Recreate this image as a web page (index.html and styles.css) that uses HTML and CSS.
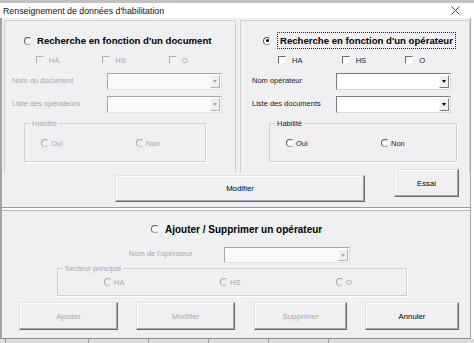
FILE: index.html
```html
<!DOCTYPE html>
<html lang="fr">
<head>
  <meta charset="UTF-8">
  <title>Renseignement de données d'habilitation</title>
  <link rel="stylesheet" href="styles.css">
</head>
<body>
  <div class="window">
    <div class="titlebar">
      <span class="title">Renseignement de données d'habilitation</span>
      <svg class="close" width="9" height="9" viewBox="0 0 9 9">
        <path d="M0.5 0.5 L8.5 8.5 M8.5 0.5 L0.5 8.5" stroke="#444" stroke-width="1" fill="none"/>
      </svg>
    </div>

    <div class="client">
      <div class="top">
        <div class="panels">
          <!-- Recherche par document (désactivé) -->
          <section class="panel panel-left off">
            <div class="head">
              <span class="radio"></span>
              <span class="head-text">Recherche en fonction d'un document</span>
            </div>
            <div class="checks">
              <label class="check-item"><span class="check"></span>HA</label>
              <label class="check-item"><span class="check"></span>HS</label>
              <label class="check-item"><span class="check"></span>O</label>
            </div>
            <div class="field">
              <span class="label">Nom du document</span>
              <span class="combo"><span class="drop"></span></span>
            </div>
            <div class="field field-2">
              <span class="label">Liste des opérateurs</span>
              <span class="combo"><span class="drop"></span></span>
            </div>
            <fieldset class="group">
              <legend>Habilité</legend>
              <div class="options">
                <label class="opt"><span class="radio"></span>Oui</label>
                <label class="opt"><span class="radio"></span>Non</label>
              </div>
            </fieldset>
          </section>

          <!-- Recherche par opérateur (actif) -->
          <section class="panel panel-right">
            <div class="head">
              <span class="radio on"></span>
              <span class="head-text focus">Recherche en fonction d'un opérateur</span>
            </div>
            <div class="checks">
              <label class="check-item"><span class="check"></span>HA</label>
              <label class="check-item"><span class="check"></span>HS</label>
              <label class="check-item"><span class="check"></span>O</label>
            </div>
            <div class="field">
              <span class="label">Nom opérateur</span>
              <span class="combo"><span class="drop"></span></span>
            </div>
            <div class="field field-2">
              <span class="label">Liste des documents</span>
              <span class="combo"><span class="drop"></span></span>
            </div>
            <fieldset class="group">
              <legend>Habilité</legend>
              <div class="options">
                <label class="opt"><span class="radio"></span>Oui</label>
                <label class="opt"><span class="radio"></span>Non</label>
              </div>
            </fieldset>
          </section>
        </div>

        <div class="actions">
          <button class="btn btn-modifier">Modifier</button>
          <button class="btn btn-essai">Essai</button>
        </div>
      </div>

      <div class="divider"></div>

      <!-- Ajout / suppression -->
      <div class="bottom off">
        <div class="head">
          <span class="radio"></span>
          <span class="head-text">Ajouter / Supprimer un opérateur</span>
        </div>
        <div class="field">
          <span class="label">Nom de l'opérateur</span>
          <span class="combo"><span class="drop"></span></span>
        </div>
        <fieldset class="group">
          <legend>Secteur principal</legend>
          <div class="options">
            <label class="opt"><span class="radio"></span>HA</label>
            <label class="opt"><span class="radio"></span>HS</label>
            <label class="opt"><span class="radio"></span>O</label>
          </div>
        </fieldset>
        <div class="buttons">
          <button class="btn" disabled>Ajouter</button>
          <button class="btn" disabled>Modifier</button>
          <button class="btn" disabled>Supprimer</button>
          <button class="btn btn-annuler">Annuler</button>
        </div>
      </div>
    </div>

    <div class="sheet">
      <span></span><span></span><span></span><span></span><span></span><span></span>
    </div>
  </div>
</body>
</html>
```

FILE: styles.css
```css
:root {
  --face: #f0eff2;
  --text: #1a1a1a;
  --muted: #a9a9ad;
  --edge: #a4a4a8;
  --frame: #cfcfd3;
}
* {
  box-sizing: border-box;
}
body {
  margin: 0;
  background: #ffffff;
  font-family: 'Liberation Sans', Arial, sans-serif;
  font-size: 7.5px;
  color: var(--text);
}
.window {
  width: 474px;
  height: 343px;
  overflow: hidden;
}
.titlebar {
  height: 18px;
  border-top: 3px solid #c2c2c4;
  background: #ffffff;
  display: flex;
  align-items: center;
  justify-content: space-between;
  padding: 0 14px 0 3px;
}
.title {
  font-size: 8.8px;
  color: #111;
}
.client {
  width: 471px;
  height: 321px;
  background: var(--face);
  border-left: 2px solid var(--edge);
  border-right: 1px solid var(--edge);
  border-bottom: 1px solid #8e8e92;
}
.top {
  height: 189px;
  padding: 2px 0 0 2px;
}
.panels {
  display: flex;
  gap: 4px;
}
.panel {
  height: 153px;
  border: 1px solid var(--frame);
  border-bottom: none;
}
.panel-left {
  width: 232px;
}
.panel-right {
  width: 230px;
}

/* titres avec bouton radio */
.head {
  display: flex;
  align-items: center;
  height: 17px;
  margin-top: 11px;
}
.head-text {
  font-weight: bold;
  font-size: 9.6px;
  color: #000;
}
.panel-left .head {
  padding-left: 19px;
  gap: 5px;
}
.panel-right .head {
  padding-left: 22px;
  gap: 6px;
}
.focus {
  border: 1px dotted #222;
  padding: 2px;
}

/* radios et cases */
.radio {
  display: inline-flex;
  align-items: center;
  justify-content: center;
  flex: none;
  width: 8px;
  height: 8px;
  border-radius: 50%;
  border: 1px solid;
  border-color: #5a5a5e #f4f4f4 #9a9a9e #5a5a5e;
  background: #ffffff;
}
.radio.on::after {
  content: "";
  width: 3px;
  height: 3px;
  border-radius: 50%;
  background: #000;
}
.check {
  display: inline-block;
  flex: none;
  width: 8px;
  height: 8px;
  border: 1px solid;
  border-color: #6e6e72 #f6f6f6 #f6f6f6 #6e6e72;
  background: #ffffff;
}
.checks {
  display: flex;
  height: 12px;
  margin-top: 5px;
}
.check-item {
  display: flex;
  align-items: center;
  gap: 5px;
}
.panel-left .checks {
  padding-left: 31px;
}
.panel-left .check-item {
  width: 67px;
}
.panel-right .checks {
  padding-left: 37px;
}
.panel-right .check-item {
  width: 65.5px;
  gap: 6px;
}

/* libellés + listes déroulantes */
.field {
  display: flex;
  align-items: center;
  height: 17px;
  margin-top: 7px;
}
.field-2 {
  margin-top: 6px;
}
.panel-left .field {
  padding-left: 7px;
}
.panel-left .label {
  width: 95px;
}
.panel-right .field {
  padding-left: 11px;
}
.panel-right .label {
  width: 84px;
}
.label {
  padding-bottom: 3px;
}
.combo {
  display: flex;
  justify-content: flex-end;
  width: 115px;
  height: 17px;
  border: 1px solid;
  border-color: #7c7c80 #d8d8dc #d8d8dc #7c7c80;
  background: #ffffff;
  padding: 1px;
}
.drop {
  width: 10px;
  height: 100%;
  border: 1px solid;
  border-color: #f8f8f8 #7c7c80 #7c7c80 #f8f8f8;
  background: var(--face);
  display: flex;
  align-items: center;
  justify-content: center;
}
.drop::after {
  content: "";
  border-left: 2.5px solid transparent;
  border-right: 2.5px solid transparent;
  border-top: 3px solid #000;
}

/* cadres */
.group {
  min-width: 0;
  margin: 6px 0 0 0;
  padding: 0 0 12px 0;
  border: 1px solid var(--frame);
  box-shadow: 1px 1px 0 #ffffff;
}
.group legend {
  line-height: 9px;
  padding: 0 2px;
  margin-left: 5px;
}
.panel-left .group {
  margin-left: 19px;
  width: 182px;
}
.panel-right .group {
  margin-left: 28px;
  width: 188px;
}
.options {
  display: flex;
  height: 12px;
  margin-top: 9px;
  padding-left: 16px;
}
.opt {
  display: flex;
  align-items: center;
  gap: 2px;
  width: 95px;
}
.opt:last-child {
  width: auto;
}

/* boutons */
.btn {
  font-family: 'Liberation Sans', Arial, sans-serif;
  font-size: 7.8px;
  color: #000;
  background: var(--face);
  border: 1px solid;
  border-color: #e2e2e6 #6a6a6e #6a6a6e #e2e2e6;
  box-shadow: inset -1px -1px 0 #a8a8ac, inset 1px 1px 0 #ffffff;
  padding: 0;
}
.btn:disabled {
  color: var(--muted);
}
.actions {
  display: flex;
  align-items: flex-start;
  margin-top: -4px;
  padding-left: 111px;
  gap: 29px;
}
.btn-modifier {
  width: 250px;
  height: 27px;
  margin-top: 6px;
}
.btn-essai {
  width: 65px;
  height: 28px;
}

.divider {
  height: 4px;
  border-top: 1px solid #9a9a9e;
  border-bottom: 1px solid #b8b8bc;
  background: #fbfbfb;
}

/* partie basse */
.bottom {
  height: 127px;
}
.bottom .head {
  margin-top: 11px;
  height: 14px;
  padding-left: 149px;
  gap: 6px;
}
.bottom .head-text {
  font-size: 10px;
}
.bottom .field {
  margin-top: 11px;
  height: 16px;
  padding-left: 127px;
}
.bottom .label {
  width: 95px;
}
.bottom .combo {
  width: 126px;
  height: 16px;
}
.bottom .group {
  margin: 1px 0 0 55px;
  width: 350px;
  padding-bottom: 8px;
}
.bottom .options {
  height: 10px;
  margin-top: 4px;
  padding-left: 46px;
}
.bottom .opt {
  width: 116px;
}
.bottom .opt:last-child {
  width: auto;
}
.buttons {
  display: flex;
  gap: 18px;
  margin-top: 6px;
  padding-left: 17px;
}
.buttons .btn {
  width: 99px;
  height: 28px;
}
.buttons .btn:nth-child(3) {
  width: 93px;
  margin-left: 1px;
}
.buttons .btn-annuler {
  width: 94px;
}

/* éléments désactivés */
.off .label,
.off .check-item,
.off .opt,
.off legend {
  color: var(--muted);
}
.off .radio {
  border-color: #a6a6aa #f4f4f4 #c6c6ca #a6a6aa;
  background: var(--face);
}
.bottom.off .head .radio,
.panel-left .head .radio {
  border-color: #5a5a5e #f4f4f4 #9a9a9e #5a5a5e;
  background: #ffffff;
}
.off .check {
  border-color: #b0b0b4 #f6f6f6 #f6f6f6 #b0b0b4;
  background: var(--face);
}
.off .combo {
  border-color: #a8a8ac #e4e4e8 #e4e4e8 #a8a8ac;
  background: #fafafa;
}
.off .drop {
  border-color: #fafafa #b4b4b8 #b4b4b8 #fafafa;
}
.off .drop::after {
  border-top-color: #a8a8ac;
}

/* feuille Excel visible sous la fenêtre */
.sheet {
  height: 4px;
  display: flex;
  background: #dcdcde;
}
.sheet span {
  width: 60px;
  border-right: 1px solid #9c9ca0;
}
.sheet span:first-child {
  width: 6px;
}
.sheet span:nth-child(2) {
  width: 83px;
}
```
